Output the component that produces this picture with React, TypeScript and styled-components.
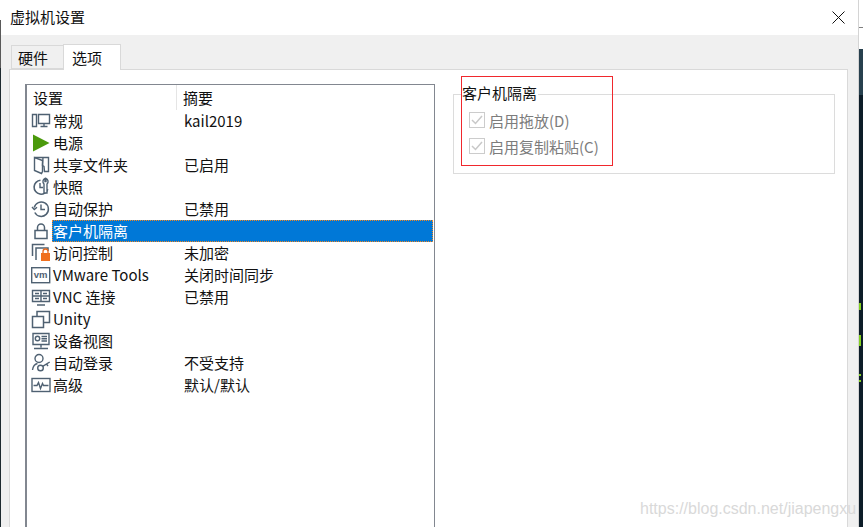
import type { ReactNode } from "react";
import styled, { createGlobalStyle } from "styled-components";

const GlobalStyle = createGlobalStyle`
  html, body {
    margin: 0;
    padding: 0;
    background: #fff;
  }
  body {
    font-family: "Noto Sans CJK SC", "Noto Sans", sans-serif;
    font-size: 15px;
    color: #111;
  }
  * {
    box-sizing: border-box;
  }
`;

const Screen = styled.div`
  position: relative;
  display: flex;
  width: 863px;
  height: 527px;
  overflow: hidden;
`;
const LeftEdge = styled.div`
  width: 1px;
  background: linear-gradient(#ffffff 0 20px, #5a5a5a 20px 68px, #1e2a30 68px);
`;
const RightEdge = styled.div`
  width: 4px;
  background:
    linear-gradient(#84d020, #84d020) 0 303px / 2px 7px no-repeat,
    linear-gradient(#84d020, #84d020) 0 335px / 2px 11px no-repeat,
    linear-gradient(#84d020, #84d020) 0 374px / 2px 2px no-repeat,
    linear-gradient(#84d020, #84d020) 0 380px / 2px 2px no-repeat,
    linear-gradient(#ffffff 0 27px, #7f7f7f 27px 28px, #ffffff 28px 49px, #27404e 49px 95px, #0c1c28 95px);
`;
const Dialog = styled.div`
  flex: 1;
  display: flex;
  flex-direction: column;
  background: #f0f0f0;
  border-right: 1px solid #d4d4d4;
`;
const TitleBar = styled.div`
  height: 35px;
  flex: none;
  display: flex;
  align-items: center;
  justify-content: space-between;
  padding: 0 13px 3px 9px;
  background: #fff;
  font-size: 15px;
`;
const CloseIcon = styled.svg`
  margin-top: 3px;
`;
const Tabs = styled.div`
  display: flex;
  align-items: flex-end;
  height: 35px;
  flex: none;
  padding-left: 10px;
  margin-bottom: -1px;
  position: relative;
  z-index: 1;
`;
const Tab = styled.div<{ $active?: boolean }>`
  height: ${(p) => (p.$active ? 26 : 24)}px;
  width: ${(p) => (p.$active ? 58 : 53)}px;
  margin-left: ${(p) => (p.$active ? -1 : 0)}px;
  margin-bottom: ${(p) => (p.$active ? 0 : 1)}px;
  padding-left: ${(p) => (p.$active ? 8 : 6)}px;
  line-height: ${(p) => (p.$active ? 25 : 24)}px;
  background: ${(p) => (p.$active ? "#fff" : "#f0f0f0")};
  border: 1px solid #d9d9d9;
  border-bottom: ${(p) => (p.$active ? "none" : "1px solid #d9d9d9")};
`;
const Panel = styled.div`
  flex: 1;
  display: flex;
  gap: 18px;
  margin: 0 10px 0 8px;
  padding: 14px 12px 0 15px;
  background: #fff;
  border: 1px solid #d9d9d9;
  border-bottom: none;
`;
const ListBox = styled.div`
  width: 410px;
  flex: none;
  padding: 0 1px;
  border: 1px solid #828790;
  border-bottom: none;
  border-left-width: 2px;
`;
const ListHead = styled.div`
  display: flex;
  height: 25px;
  line-height: 26px;
`;
const HeadCell = styled.div<{ $width: number; $pad: number; $divider?: boolean }>`
  width: ${(p) => p.$width}px;
  padding-left: ${(p) => p.$pad}px;
  border-right: ${(p) => (p.$divider ? "1px solid #e5e5e5" : "none")};
`;
const Row = styled.div`
  display: flex;
  height: 22px;
`;
const IconSlot = styled.div`
  width: 24px;
  flex: none;
  display: flex;
  align-items: center;
  padding-left: 3px;
`;
const RowBody = styled.div<{ $selected?: boolean }>`
  flex: 1;
  display: flex;
  line-height: 19px;
  background: ${(p) => (p.$selected ? "#0078d7" : "transparent")};
  color: ${(p) => (p.$selected ? "#fff" : "#111")};
  border: 1px ${(p) => (p.$selected ? "dotted #f5871f" : "solid transparent")};
`;
const Name = styled.div`
  width: 131px;
  flex: none;
  white-space: nowrap;
`;
const Summary = styled.div`
  flex: 1;
  white-space: nowrap;
`;
const Group = styled.fieldset`
  margin: 0;
  flex: 1;
  height: 90px;
  padding: 0 15px;
  border: 1px solid #dcdcdc;
  min-width: 0;
`;
const GroupTitle = styled.legend`
  margin-left: -8px;
  padding: 0 1px;
  height: 20px;
  line-height: 18px;
`;
const CheckRow = styled.div`
  display: flex;
  align-items: center;
  gap: 4px;
  height: 26px;
  color: #7c7c7c;
  &:first-of-type {
    margin-top: 3px;
  }
`;
const CheckBox = styled.span`
  width: 16px;
  height: 16px;
  flex: none;
  display: flex;
  align-items: center;
  justify-content: center;
  border: 1px solid #cccccc;
  background: #fff;
`;
const RedMark = styled.div`
  position: absolute;
  left: 461px;
  top: 76px;
  width: 152px;
  height: 90px;
  border: 1px solid #f0282d;
  pointer-events: none;
`;
const Watermark = styled.div`
  position: absolute;
  left: 640px;
  top: 500px;
  font-family: "Liberation Sans", Arial, sans-serif;
  font-size: 16px;
  color: #d9d9d9;
  white-space: nowrap;
`;

const STROKE = "#4f6172";

const Icon = ({ children }: { children: ReactNode }) => (
  <svg width="20" height="20" viewBox="0 0 20 20" fill="none" stroke={STROKE} strokeWidth="1.4">
    {children}
  </svg>
);

const icons: Record<string, ReactNode> = {
  general: (
    <Icon>
      <path d="M1.5 3.5h4v12h-4z" />
      <path d="M7.5 3.5h11v9h-11zM13 12.5v2.5M9.5 15.5h7" />
    </Icon>
  ),
  power: (
    <svg width="20" height="20" viewBox="0 0 20 20">
      <path d="M2 1.5 18.5 10 2 18.5z" fill="#4b9a0c" />
    </svg>
  ),
  folder: (
    <Icon>
      <path d="M3.5 2.5h14v14h-4l-.5-5-1.5-1 .5-8" />
      <path d="M3.5 2.5v13l7 3 1-2V5.5l-8-3z" />
    </Icon>
  ),
  snapshot: (
    <Icon>
      <path d="M9.5 3.2a7 7 0 1 0 7.3 9" strokeWidth="1.6" />
      <path d="M9 6v4.5h3" />
      <path d="M14 1.5a3.3 3.3 0 0 0-1 5.5V16h3V7a3.3 3.3 0 0 0-1-5.5v3h-1z" fill="#fff" />
    </Icon>
  ),
  protect: (
    <Icon>
      <path d="M3.2 8.5a7.2 7.2 0 1 1 .6 5" strokeWidth="1.5" />
      <path d="M1 8l2.3 2.5L6 8.3" />
      <path d="M10 5.5v5h4" />
    </Icon>
  ),
  lock: (
    <Icon>
      <path d="M4 9.5h12v8H4z" strokeWidth="1.5" />
      <path d="M6.5 9.5V6.5a3.5 3.5 0 0 1 7 0v3" strokeWidth="1.5" />
    </Icon>
  ),
  access: (
    <svg width="20" height="20" viewBox="0 0 20 20" fill="none" stroke={STROKE} strokeWidth="1.5">
      <path d="M1.5 13V1.5h12" />
      <path d="M5 17V5h12v3" />
      <path d="M12 10V8.5a2.5 2.5 0 0 1 5 0V10" stroke="#e96a1f" strokeWidth="1.3" />
      <rect x="10" y="10" width="9" height="8" fill="#f0701f" stroke="none" />
    </svg>
  ),
  tools: (
    <Icon>
      <rect x="0.7" y="2.7" width="18" height="15" />
      <text x="9.7" y="13" fontSize="9.5" fontWeight="700" textAnchor="middle" fill={STROKE} stroke="none" fontFamily="Liberation Sans, sans-serif">
        vm
      </text>
    </Icon>
  ),
  vnc: (
    <Icon>
      <path d="M1.5 3.5h17v11h-17zM1.5 9h17M10 3.5v11M6 18h8" />
      <path d="M4 6.5h4M12 6.5h4M4 11.5h4M12 11.5h4" />
    </Icon>
  ),
  unity: (
    <Icon>
      <path d="M1.5 7.5h11v11h-11z" strokeWidth="1.5" />
      <path d="M6 7.5V2.5h12.5v11h-6" strokeWidth="1.5" />
    </Icon>
  ),
  device: (
    <Icon>
      <path d="M2 2.5h16v11H2zM10 13.5v3M3 17.5h14" />
      <circle cx="6.5" cy="7.5" r="2.2" />
      <path d="M10.5 5.5h5.5M10.5 7.7h5.5M10.5 10h5.5" />
    </Icon>
  ),
  login: (
    <Icon>
      <circle cx="8" cy="5.5" r="4" />
      <path d="M1.5 17c.5-3.5 2.5-6 5-6.5" />
      <circle cx="9.5" cy="15" r="2.8" />
      <path d="M11.7 13.3l7-4.3M15.5 11l1.5 2" />
    </Icon>
  ),
  advanced: (
    <Icon>
      <rect x="1" y="3.5" width="18" height="13" />
      <path d="M2.5 10.5h3.5l1.5-3 2 6 2-5 1 2h5" />
    </Icon>
  ),
};

const rows = [
  { icon: "general", name: "常规", summary: "kail2019" },
  { icon: "power", name: "电源", summary: "" },
  { icon: "folder", name: "共享文件夹", summary: "已启用" },
  { icon: "snapshot", name: "快照", summary: "" },
  { icon: "protect", name: "自动保护", summary: "已禁用" },
  { icon: "lock", name: "客户机隔离", summary: "", selected: true },
  { icon: "access", name: "访问控制", summary: "未加密" },
  { icon: "tools", name: "VMware Tools", summary: "关闭时间同步" },
  { icon: "vnc", name: "VNC 连接", summary: "已禁用" },
  { icon: "unity", name: "Unity", summary: "" },
  { icon: "device", name: "设备视图", summary: "" },
  { icon: "login", name: "自动登录", summary: "不受支持" },
  { icon: "advanced", name: "高级", summary: "默认/默认" },
];

const Tick = () => (
  <svg width="12" height="10" viewBox="0 0 12 10" fill="none" stroke="#c8c8c8" strokeWidth="1.5">
    <path d="M1 5l3.5 3.5L11 1" />
  </svg>
);

const App = () => (
  <Screen>
    <GlobalStyle />
    <LeftEdge />
    <Dialog>
      <TitleBar>
        <span>虚拟机设置</span>
        <CloseIcon width="13" height="13" viewBox="0 0 13 13" stroke="#111" strokeWidth="1">
          <path d="M.5.5l12 12M12.5.5l-12 12" />
        </CloseIcon>
      </TitleBar>
      <Tabs>
        <Tab>硬件</Tab>
        <Tab $active>选项</Tab>
      </Tabs>
      <Panel>
        <ListBox>
          <ListHead>
            <HeadCell $width={149} $pad={5} $divider>设置</HeadCell>
            <HeadCell $width={200} $pad={6}>摘要</HeadCell>
          </ListHead>
          {rows.map((row) => (
            <Row key={row.name}>
              <IconSlot>{icons[row.icon]}</IconSlot>
              <RowBody $selected={row.selected}>
                <Name>{row.name}</Name>
                <Summary>{row.summary}</Summary>
              </RowBody>
            </Row>
          ))}
        </ListBox>
        <Group>
          <GroupTitle>客户机隔离</GroupTitle>
          <CheckRow>
            <CheckBox><Tick /></CheckBox>
            启用拖放(D)
          </CheckRow>
          <CheckRow>
            <CheckBox><Tick /></CheckBox>
            启用复制粘贴(C)
          </CheckRow>
        </Group>
      </Panel>
    </Dialog>
    <RightEdge />
    <RedMark />
    <Watermark>https://blog.csdn.net/jiapengxu</Watermark>
  </Screen>
);

export default App;
